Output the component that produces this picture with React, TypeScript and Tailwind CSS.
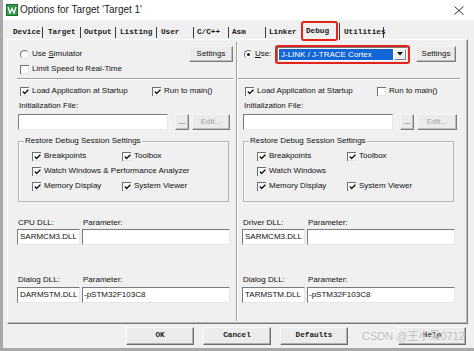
import React from "react";

const MONO = "font-['Liberation_Mono','Courier_New',monospace] font-bold text-[7.7px] text-[#1a1a1a]";

function CheckBox({ checked = true }: { checked?: boolean }) {
  return (
    <span className="flex items-center justify-center w-[9px] h-[9px] shrink-0 bg-white border-t border-l border-[#6f6f6f] shadow-[inset_-1px_-1px_0_#e6e6e6]">
      {checked && (
        <svg width="7" height="6" viewBox="0 0 7 6">
          <path d="M0.8 2.6 L2.7 4.6 L6.3 0.8" fill="none" stroke="#111" strokeWidth="1.4" />
        </svg>
      )}
    </span>
  );
}

function Radio({ checked = false }: { checked?: boolean }) {
  return (
    <span className="flex items-center justify-center w-[9px] h-[9px] shrink-0 rounded-full bg-white border border-t-[#6f6f6f] border-l-[#6f6f6f] border-r-[#e2e2e2] border-b-[#e2e2e2]">
      {checked && <span className="w-[3px] h-[3px] rounded-full bg-[#111]" />}
    </span>
  );
}

function CheckItem({ label, checked = true, className = "" }: { label: string; checked?: boolean; className?: string }) {
  return (
    <div className={`flex items-center h-[10px] ${className}`}>
      <CheckBox checked={checked} />
      <span className="ml-[3px] text-[8px] leading-[10px] whitespace-nowrap">{label}</span>
    </div>
  );
}

function Btn({ children, className = "", disabled = false }: { children: React.ReactNode; className?: string; disabled?: boolean }) {
  return (
    <div
      className={`flex items-center justify-center shrink-0 bg-[#ebebeb] border border-t-[#f4f4f4] border-l-[#f4f4f4] border-r-[#7d7d7d] border-b-[#7d7d7d] shadow-[inset_-1px_-1px_0_#bdbdbd] text-[8px] leading-[10px] whitespace-nowrap ${
        disabled ? "text-[#a3a3a3]" : "text-[#111]"
      } ${className}`}
    >
      {children}
    </div>
  );
}

function Field({ children, className = "" }: { children?: React.ReactNode; className?: string }) {
  return (
    <div className={`flex items-center h-[16px] shrink-0 bg-white border border-t-[#7a7a7a] border-l-[#7a7a7a] border-r-[#e6e6e6] border-b-[#e6e6e6] text-[8px] leading-[10px] whitespace-nowrap overflow-hidden ${className}`}>
      {children}
    </div>
  );
}

function Dropdown() {
  return (
    <div className="relative w-[131px] h-[15px] shrink-0 bg-white border border-t-[#7a7a7a] border-l-[#7a7a7a] border-r-[#e6e6e6] border-b-[#e6e6e6] flex items-stretch p-[1px]">
      <div className="flex-1 bg-[#1466d6] text-white text-[8px] leading-[11px] pl-[2px] whitespace-nowrap">J-LINK / J-TRACE Cortex</div>
      <div className="w-[12px] ml-[1px] bg-[#eeeeee] border border-t-[#fafafa] border-l-[#fafafa] border-r-[#808080] border-b-[#808080] flex items-center justify-center">
        <svg width="6" height="4" viewBox="0 0 6 4">
          <path d="M0 0 L6 0 L3 3.5 Z" fill="#111" />
        </svg>
      </div>
      <div className="absolute -inset-[3px] border-2 border-[#e3231c] rounded-[3px]" />
    </div>
  );
}

function GroupBox({ watchLabel }: { watchLabel: string }) {
  return (
    <div className="relative mt-[11px] ml-[1px] w-[211px] h-[61px] border border-[#b4b4b4] shadow-[inset_1px_1px_0_#ffffff] flex flex-col pt-[9px] pl-[13px] gap-[5px]">
      <span className="absolute left-[5px] -top-[6px] px-[1px] bg-[#f0f0f0] text-[8px] leading-[10px] whitespace-nowrap">
        Restore Debug Session Settings
      </span>
      <div className="flex">
        <CheckItem label="Breakpoints" className="w-[90px]" />
        <CheckItem label="Toolbox" />
      </div>
      <CheckItem label={watchLabel} />
      <div className="flex">
        <CheckItem label="Memory Display" className="w-[90px]" />
        <CheckItem label="System Viewer" />
      </div>
    </div>
  );
}

function Half({ right = false }: { right?: boolean }) {
  return (
    <div className={`w-[228px] shrink-0 flex flex-col pt-[6px] ${right ? "pl-[4px]" : "pl-[9px]"}`}>
      <div className="flex items-center h-[16px] w-[216px]">
        {right ? (
          <>
            <span className="ml-[2px]">
              <Radio checked />
            </span>
            <span className="ml-[2px] w-[22px] text-[8px] leading-[10px]">
              <span className="underline">U</span>se:
            </span>
            <Dropdown />
            <Btn className="ml-auto mr-[2px] w-[40px] h-[16px]">Settings</Btn>
          </>
        ) : (
          <>
            <span className="ml-[3px]">
              <Radio />
            </span>
            <span className="ml-[3px] text-[8px] leading-[10px] whitespace-nowrap">
              Use <span className="underline">S</span>imulator
            </span>
            <Btn className="ml-auto w-[44px] h-[16px]">Settings</Btn>
          </>
        )}
      </div>
      <div className="mt-[2px] h-[10px] pl-[3px]">{!right && <CheckItem label="Limit Speed to Real-Time" checked={false} />}</div>
      <div className={`mt-[4px] h-[2px] border-t border-[#a0a0a0] bg-white ${right ? "w-[222px] -ml-[4px]" : "w-[216px]"}`} />
      <div className="mt-[6px] h-[10px] flex pl-[3px]">
        <CheckItem label="Load Application at Startup" className="w-[132px]" />
        <CheckItem label="Run to main()" checked={!right} />
      </div>
      <div className="mt-[5px] h-[10px] pl-[2px] text-[8px] leading-[10px]">Initialization File:</div>
      <div className="mt-[3px] flex h-[16px]">
        <Field className="ml-[1px] w-[150px]" />
        <Btn className="ml-[7px] w-[14px] h-[16px] items-end pb-[2px]">...</Btn>
        <Btn disabled className={`ml-[3px] h-[16px] ${right ? "w-[40px]" : "w-[38px]"}`}>
          Edit...
        </Btn>
      </div>
      <GroupBox watchLabel={right ? "Watch Windows" : "Watch Windows & Performance Analyzer"} />
      <div className="mt-[16px] h-[10px] flex text-[8px] leading-[10px] pl-[1px]">
        <span className="w-[65px]">{right ? "Driver DLL:" : "CPU DLL:"}</span>
        <span>Parameter:</span>
      </div>
      <div className="mt-[1px] flex">
        <Field className="w-[63px] pl-[2px]">SARMCM3.DLL</Field>
        <Field className="ml-[2px] w-[148px]" />
      </div>
      <div className="mt-[30px] h-[10px] flex text-[8px] leading-[10px] pl-[1px]">
        <span className="w-[65px]">Dialog DLL:</span>
        <span>Parameter:</span>
      </div>
      <div className="mt-[2px] flex">
        <Field className="w-[63px] pl-[2px]">{right ? "TARMSTM.DLL" : "DARMSTM.DLL"}</Field>
        <Field className="ml-[2px] w-[148px] pl-[1px]">-pSTM32F103C8</Field>
      </div>
    </div>
  );
}

const tabs: { label: string; w: string; pl: string; sep: boolean }[] = [
  { label: "Device", w: "w-[34px]", pl: "pl-[4px]", sep: true },
  { label: "Target", w: "w-[38px]", pl: "pl-[5px]", sep: true },
  { label: "Output", w: "w-[35px]", pl: "pl-[3px]", sep: true },
  { label: "Listing", w: "w-[41px]", pl: "pl-[4px]", sep: true },
  { label: "User", w: "w-[37px]", pl: "pl-[4px]", sep: true },
  { label: "C/C++", w: "w-[35px]", pl: "pl-[3px]", sep: true },
  { label: "Asm", w: "w-[37px]", pl: "pl-[3px]", sep: true },
  { label: "Linker", w: "w-[35px]", pl: "pl-[3px]", sep: false },
];

export default function App() {
  return (
    <div className="relative w-[474px] h-[351px] overflow-hidden bg-[#f0f0f0] border-l-[3px] border-b-[3px] border-[#a9a9a9] flex flex-col font-['Liberation_Sans',Arial,sans-serif] text-[#111]">
      {/* Title bar */}
      <div className="h-[20px] shrink-0 bg-white flex items-center">
        <svg className="ml-[3px]" width="12" height="12" viewBox="0 0 12 12">
          <rect x="0.5" y="0.5" width="11" height="11" fill="#2f9a45" stroke="#1d6b2d" />
          <path d="M2 3 L4 9 L6 4.5 L8 9 L10 3" fill="none" stroke="#ffffff" strokeWidth="1.3" />
        </svg>
        <span className="ml-[2px] text-[10px] leading-[12px] text-[#1b1b1b] whitespace-nowrap">Options for Target 'Target 1'</span>
        <svg className="ml-auto mr-[10px]" width="10" height="9" viewBox="0 0 10 9">
          <path d="M0.5 0.5 L9.5 8.5 M9.5 0.5 L0.5 8.5" stroke="#333" strokeWidth="1" />
        </svg>
      </div>

      {/* Tabs */}
      <div className="h-[19px] shrink-0 flex items-end pb-[1px] pl-[6px]">
        {tabs.map((t) => (
          <div
            key={t.label}
            className={`${t.w} ${t.pl} h-[11px] shrink-0 flex items-center leading-[9px] whitespace-nowrap ${MONO} ${
              t.sep ? "border-r border-[#3c3c3c]" : ""
            }`}
          >
            {t.label}
          </div>
        ))}
        <div
          className={`relative z-10 w-[39px] h-[18px] -mb-[2px] shrink-0 bg-[#f0f0f0] border-t border-l border-r border-t-white border-l-white border-r-[#3c3c3c] rounded-t-[2px] pl-[4px] pt-[4px] leading-[9px] ${MONO}`}
        >
          Debug
          <div className="absolute -left-[1px] -top-[2px] w-[37px] h-[20px] border-2 border-[#e3231c] rounded-[3px]" />
        </div>
        <div className={`w-[44px] h-[11px] shrink-0 pl-[4px] flex items-center leading-[9px] border-r border-[#3c3c3c] ${MONO}`}>
          Utilities
        </div>
      </div>

      {/* Panel */}
      <div className="ml-[4px] w-[461px] h-[285px] shrink-0 flex border border-t-white border-l-white border-r-[#7a7a7a] border-b-[#7a7a7a] shadow-[inset_-1px_-1px_0_#b8b8b8]">
        <Half />
        <div className="w-[2px] my-[2px] shrink-0 border-l border-[#a0a0a0] bg-white" />
        <Half right />
      </div>

      {/* Bottom buttons */}
      <div className="mt-[3px] flex h-[18px]">
        <div className={`ml-[123px] w-[68px] h-[18px] flex items-center justify-center bg-[#ececec] border border-t-[#f8f8f8] border-l-[#f8f8f8] border-r-[#6e6e6e] border-b-[#6e6e6e] shadow-[inset_-1px_-1px_0_#b0b0b0,0_0_0_0_#000] ${MONO}`}>OK</div>
        <div className={`ml-[9px] w-[68px] h-[18px] flex items-center justify-center bg-[#ececec] border border-t-[#f8f8f8] border-l-[#f8f8f8] border-r-[#6e6e6e] border-b-[#6e6e6e] shadow-[inset_-1px_-1px_0_#b0b0b0] ${MONO}`}>Cancel</div>
        <div className={`ml-[9px] w-[68px] h-[18px] flex items-center justify-center bg-[#ececec] border border-t-[#f8f8f8] border-l-[#f8f8f8] border-r-[#6e6e6e] border-b-[#6e6e6e] shadow-[inset_-1px_-1px_0_#b0b0b0] ${MONO}`}>Defaults</div>
        <div className={`ml-[50px] w-[68px] h-[18px] flex items-center justify-center bg-[#ececec] border border-t-[#f8f8f8] border-l-[#f8f8f8] border-r-[#6e6e6e] border-b-[#6e6e6e] shadow-[inset_-1px_-1px_0_#b0b0b0] ${MONO}`}>Help</div>
      </div>

      {/* Watermark */}
      <div className="absolute left-[359px] top-[329px] text-[11px] leading-[14px] whitespace-nowrap text-[#b2b2b2]/90 [text-shadow:0_0_1px_#ffffff] font-['Liberation_Sans','Noto_Sans_CJK_SC',sans-serif]">
        CSDN @王小呆0712
      </div>
    </div>
  );
}
